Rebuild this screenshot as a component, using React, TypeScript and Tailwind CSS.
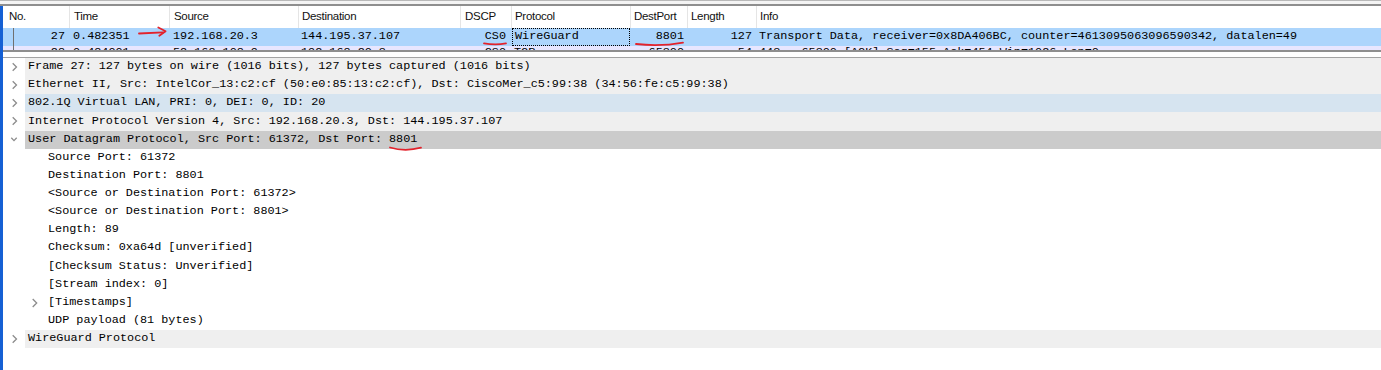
import React from "react";

const CHEV = "#8c8c8c";

function TopRow({ text, bg, open }: { text: React.ReactNode; bg: string; open?: boolean }) {
  return (
    <div className="flex h-[18.13px]">
      <div className="w-[22px] h-full shrink-0">
        <svg width="22" height="18" viewBox="0 0 22 18">
          {open ? (
            <polyline points="8.3,6.8 11,9.6 13.7,6.8" fill="none" stroke={CHEV} strokeWidth="1.3" />
          ) : (
            <polyline points="9.7,5.2 13.5,9 9.7,12.8" fill="none" stroke={CHEV} strokeWidth="1.3" />
          )}
        </svg>
      </div>
      <div className={"flex-1 h-full flex items-center pl-[3px] whitespace-pre " + bg}>{text}</div>
    </div>
  );
}

function Child({ text }: { text: string }) {
  return <div className="h-[18.13px] flex items-center pl-[45px] whitespace-pre">{text}</div>;
}

export default function App() {
  return (
    <div className="relative w-[1381px] h-[370px] bg-white overflow-hidden text-black">
      <div className="h-[6px] border-t border-t-[#b9b9b9] border-b-2 border-b-[#8f8f8f] bg-[#f4f4f4]" />
      <div className="flex h-[364px]">
        <div className="w-[3px] shrink-0 bg-[#1560d4]" />
        <div className="flex-1 flex flex-col min-w-0">
          {/* Packet list header */}
          <div className="flex h-[22px] text-[11.5px] tracking-[-0.3px] text-[#111] [font-family:'Liberation_Sans',Arial,sans-serif]">
            <div className="w-[67px] h-full shrink-0 flex items-center pl-[6px] border-r border-r-[#e5e5e5]">No.</div>
            <div className="w-[100px] h-full shrink-0 flex items-center pl-[4px] border-r border-r-[#e5e5e5]">Time</div>
            <div className="w-[129px] h-full shrink-0 flex items-center pl-[4px] border-r border-r-[#e5e5e5]">Source</div>
            <div className="w-[162px] h-full shrink-0 flex items-center pl-[3px] border-r border-r-[#e5e5e5]">Destination</div>
            <div className="w-[51px] h-full shrink-0 flex items-center pl-[4px] border-r border-r-[#e5e5e5]">DSCP</div>
            <div className="w-[119px] h-full shrink-0 flex items-center pl-[3px] border-r border-r-[#e5e5e5]">Protocol</div>
            <div className="w-[57px] h-full shrink-0 flex items-center pl-[3px] border-r border-r-[#e5e5e5]">DestPort</div>
            <div className="w-[69px] h-full shrink-0 flex items-center pl-[3px] border-r border-r-[#e5e5e5]">Length</div>
            <div className="flex-1 h-full flex items-center pl-[3px]">Info</div>
          </div>

          {/* Selected row */}
          <div className="relative flex h-[18px] bg-[#acd5fc] whitespace-pre text-[11.8px] [font-family:'Liberation_Mono',monospace]">
            <div className="relative w-[67px] h-full shrink-0 flex items-center justify-end pr-[5px]">
              <div className="absolute left-[10px] top-0 w-px h-[22px] bg-[#707070]" />
              27
            </div>
            <div className="w-[100px] h-full shrink-0 flex items-center pl-[3px]">0.482351</div>
            <div className="w-[129px] h-full shrink-0 flex items-center pl-[3px]">192.168.20.3</div>
            <div className="w-[162px] h-full shrink-0 flex items-center pl-[2px]">144.195.37.107</div>
            <div className="w-[51px] h-full shrink-0 flex items-center justify-end pr-[6px]">CS0</div>
            <div className="w-[118px] h-full shrink-0 flex items-center pl-[2px] border border-dotted border-black">WireGuard</div>
            <div className="w-[58px] h-full shrink-0 flex items-center justify-end pr-[4px]">8801</div>
            <div className="w-[69px] h-full shrink-0 flex items-center justify-end pr-[5px]">127</div>
            <div className="flex-1 h-full flex items-center pl-[2px]">
              Transport Data, receiver=0x8DA406BC, counter=4613095063096590342, datalen=49
            </div>
          </div>

          {/* Partially visible next row */}
          <div className="h-[4px] overflow-hidden bg-[#e7e6ff]">
            <div className="flex h-[18px] -mt-[2px] whitespace-pre text-[11.8px] [font-family:'Liberation_Mono',monospace]">
              <div className="w-[67px] h-full shrink-0 flex items-center justify-end pr-[5px]">28</div>
              <div className="w-[100px] h-full shrink-0 flex items-center pl-[3px]">0.484001</div>
              <div className="w-[129px] h-full shrink-0 flex items-center pl-[3px]">52.168.108.9</div>
              <div className="w-[162px] h-full shrink-0 flex items-center pl-[2px]">192.168.20.3</div>
              <div className="w-[51px] h-full shrink-0 flex items-center justify-end pr-[6px]">CS0</div>
              <div className="w-[118px] h-full shrink-0 flex items-center pl-[2px]">TCP</div>
              <div className="w-[58px] h-full shrink-0 flex items-center justify-end pr-[4px]">65300</div>
              <div className="w-[69px] h-full shrink-0 flex items-center justify-end pr-[5px]">54</div>
              <div className="flex-1 h-full flex items-center pl-[2px]">443 → 65300 [ACK] Seq=155 Ack=454 Win=1026 Len=0</div>
            </div>
          </div>

          {/* Splitter */}
          <div className="h-[8px] border-t-2 border-t-[#8f8f8f] border-b border-b-[#a3a3a3] bg-white" />

          {/* Details tree */}
          <div className="flex-1 flex flex-col text-[11.8px] [font-family:'Liberation_Mono',monospace]">
            <TopRow bg="bg-[#efefef]" text="Frame 27: 127 bytes on wire (1016 bits), 127 bytes captured (1016 bits)" />
            <TopRow bg="bg-[#efefef]" text="Ethernet II, Src: IntelCor_13:c2:cf (50:e0:85:13:c2:cf), Dst: CiscoMer_c5:99:38 (34:56:fe:c5:99:38)" />
            <TopRow bg="bg-[#d6e4f0]" text="802.1Q Virtual LAN, PRI: 0, DEI: 0, ID: 20" />
            <TopRow bg="bg-[#efefef]" text="Internet Protocol Version 4, Src: 192.168.20.3, Dst: 144.195.37.107" />
            <TopRow bg="bg-[#cbcbcb]" open text="User Datagram Protocol, Src Port: 61372, Dst Port: 8801" />
            <Child text="Source Port: 61372" />
            <Child text="Destination Port: 8801" />
            <Child text="<Source or Destination Port: 61372>" />
            <Child text="<Source or Destination Port: 8801>" />
            <Child text="Length: 89" />
            <Child text="Checksum: 0xa64d [unverified]" />
            <Child text="[Checksum Status: Unverified]" />
            <Child text="[Stream index: 0]" />
            <div className="relative h-[18.13px] flex items-center pl-[45px] whitespace-pre">
              <svg className="absolute left-0 top-0" width="40" height="18" viewBox="0 0 40 18">
                <polyline points="29.7,5 33.7,9 29.7,13" fill="none" stroke={CHEV} strokeWidth="1.3" />
              </svg>
              [Timestamps]
            </div>
            <Child text="UDP payload (81 bytes)" />
            <TopRow bg="bg-[#efefef]" text="WireGuard Protocol" />
          </div>
        </div>
      </div>

      {/* Red annotations */}
      <svg className="absolute left-0 top-0 pointer-events-none" width="1381" height="370" viewBox="0 0 1381 370">
        <g fill="none" stroke="#e3222b" strokeWidth="1.8" strokeLinecap="round" strokeLinejoin="round">
          <path d="M139 33.5 L163 32.3" />
          <path d="M158.3 27.5 L165.6 31.2 L159.3 35.7" />
          <path d="M484 43.3 Q495 45.2 506 43.4" />
          <path d="M636 44 Q660 46.8 683 42.6" />
          <path d="M390 147.5 Q405 152 421 147.7" />
        </g>
      </svg>
    </div>
  );
}
